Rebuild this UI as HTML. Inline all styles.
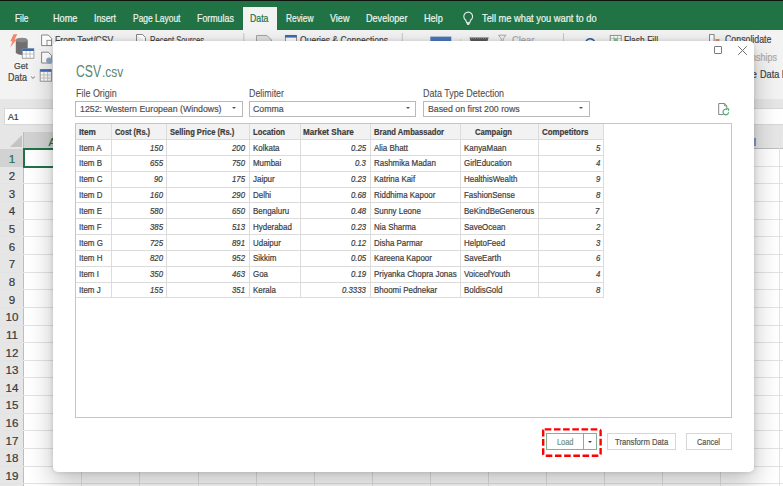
<!DOCTYPE html>
<html><head><meta charset="utf-8">
<style>
*{margin:0;padding:0;box-sizing:border-box}
html,body{width:783px;height:486px;overflow:hidden;background:#fff;font-family:"Liberation Sans",sans-serif}
.a{position:absolute}
.t{position:absolute;white-space:pre;transform-origin:0 0;font-family:"Liberation Sans",sans-serif;-webkit-text-stroke:0.2px currentColor}
#top{left:0;top:0;width:783px;height:1px;background:#0f140f}
#tabs{left:0;top:1px;width:783px;height:29px;background:#217346}
#datatab{left:243px;top:7px;width:34px;height:23px;background:#f3f3f3}
#ribbon{left:0;top:30px;width:783px;height:69px;background:#f3f3f3}
#fbar{left:0;top:99px;width:783px;height:33px;background:#e6e6e6}
#namebox{left:4px;top:107.5px;width:130px;height:17px;background:#fff;border:1px solid #d8d8d8}
#fx{left:700px;top:107.5px;width:83px;height:17px;background:#fff;border:1px solid #d8d8d8;border-right:0}
#grid{left:0;top:132px;width:783px;height:354px;background:#fff}
#colhdr{left:0;top:132px;width:783px;height:17px;background:#e6e6e6;border-bottom:1px solid #bdbdbd}
#rowhdr{left:0;top:132px;width:24px;height:354px;background:#e6e6e6;border-right:1px solid #bdbdbd}
.vl{position:absolute;top:132px;width:1px;height:354px;background:#e3e3e3}
.hl{position:absolute;left:0;width:783px;height:1px;background:#e3e3e3}
.rn{position:absolute;left:0;width:23px;text-align:center;font-size:10.4px;line-height:12px;color:#444;transform:scaleX(.95)}
#dlg{left:53px;top:41px;width:701px;height:431px;background:#fff;border-radius:5px;box-shadow:0 11px 26px rgba(0,0,0,.25),0 0 5px rgba(0,0,0,.14)}
.dd{position:absolute;top:100.5px;height:16px;border:1px solid #b9b9b9;background:#fff}
.arr{position:absolute;width:0;height:0;border-left:2.2px solid transparent;border-right:2.2px solid transparent;border-top:2.6px solid #555}
#prev{left:75px;top:123px;width:657px;height:295px;border:1px solid #c6c6c6;background:#fff}
#thdr{left:76px;top:124px;width:528px;height:15.6px;background:#f2f2f2}
.tv{position:absolute;top:124px;width:1px;height:174px;background:#dcdcdc}
.th{position:absolute;left:76px;width:528px;height:1px;background:#dcdcdc}
.btn{position:absolute;top:433px;height:17px;border:1px solid #d6d6d6;background:#fff}
</style></head><body>
<div id="top" class="a"></div>
<div id="tabs" class="a"></div>
<div id="datatab" class="a"></div>
<svg class="a" style="left:455px;top:6px" width="30" height="22"><path d="M10.8 14.2 A4.4 4.4 0 1 1 15.6 14.2 L14.7 16.8 H11.7 Z" fill="none" stroke="#e3ece6" stroke-width="1.1"/><path d="M11.6 16.6 H14.8 L14.4 18.6 Q13.2 19.6 12 18.6 Z" fill="#e3ece6"/></svg>
<div id="ribbon" class="a"></div>
<div id="fbar" class="a"></div>
<div id="namebox" class="a"></div>
<div id="fx" class="a"></div>
<svg class="a" style="left:0;top:30px" width="783" height="69">
<polygon points="13.5,4.2 17.4,4.2 14.6,9.6 16.6,9.6 10.2,17.6 12.4,11.2 10.4,11.2" fill="#f4846c"/>
<path d="M15.8 10.2 Q21.7 5.8 27.7 10.2 V23 Q21.7 27 15.8 23 Z" fill="#6f6f6f"/>
<ellipse cx="21.7" cy="10" rx="5.9" ry="2.3" fill="#8a8a8a"/>
<rect x="22.3" y="18.8" width="11.6" height="9.4" fill="#fff" stroke="#8c8c8c" stroke-width="0.8"/>
<rect x="22.3" y="18.6" width="11.6" height="2.4" fill="#3b6db5"/>
<path d="M22.3 24 H33.9 M26.2 21 V28.2 M30 21 V28.2" stroke="#b0b0b0" stroke-width="0.7"/>
<path d="M31.1 46.6 L33 48.4 L34.9 46.6" stroke="#666" stroke-width="0.9" fill="none"/>
<path d="M41.6 5 H48.3 L51.6 8.3 V15.6 H41.6 Z" fill="#fff" stroke="#7a7a7a" stroke-width="0.9"/>
<rect x="47" y="10.3" width="4.6" height="5.3" fill="#fff" stroke="#7a7a7a" stroke-width="0.8"/>
<path d="M41.6 22.2 H48.3 L51.6 25.5 V33 H41.6 Z" fill="#fff" stroke="#7a7a7a" stroke-width="0.9"/>
<circle cx="49.2" cy="30.6" r="3.1" fill="#8fa6c4"/>
<rect x="40.2" y="39.6" width="11.2" height="11.6" fill="#fff" stroke="#8c8c8c" stroke-width="0.9"/>
<rect x="40.2" y="39.4" width="11.2" height="2.4" fill="#3b6db5"/>
<path d="M40.2 45 H51.4 M40.2 48 H51.4 M43.9 41.8 V51.2 M47.6 41.8 V51.2" stroke="#b5b5b5" stroke-width="0.7"/>
<path d="M136.5 4.5 H142.5 L145.5 7.5 V12" fill="#fff" stroke="#7a7a7a" stroke-width="0.9"/>
<path d="M136.5 4.5 V12" stroke="#7a7a7a" stroke-width="0.9"/>
<rect x="243.3" y="3" width="1" height="8" fill="#c8c8c8"/>
<path d="M256.5 12 V5.5 H267 L271.5 10 V12" fill="#e0e0e0" stroke="#9a9a9a" stroke-width="0.9"/>
<rect x="285.4" y="5.4" width="11" height="8" fill="#fff" stroke="#8a8a8a" stroke-width="0.9"/>
<rect x="285" y="5" width="11.8" height="2.6" fill="#3b6db5"/>
<rect x="401.8" y="3" width="1" height="8" fill="#c8c8c8"/>
<rect x="430.3" y="6.6" width="21" height="5" fill="#4a78b8"/>
<rect x="460.3" y="9" width="0.8" height="3" fill="#c8c8c8"/>
<path d="M469.5 7.5 H488.7 L487.5 11 H470.5 Z" fill="#5a5a5a"/>
<path d="M471 8.5 H487" stroke="#9a9a9a" stroke-width="0.6" stroke-dasharray="1 1"/>
<path d="M498.5 5.2 H506 L503.2 8.8 V12 H501.3 V8.8 Z" fill="none" stroke="#a0a0a0" stroke-width="0.9"/>
<rect x="563" y="3" width="1" height="8" fill="#c8c8c8"/>
<path d="M585.8 12 A4.6 4.6 0 0 1 594.6 12" stroke="#2d5ca6" stroke-width="1.5" fill="none"/>
<rect x="610.2" y="5.4" width="11" height="7" fill="#fff" stroke="#8a8a8a" stroke-width="0.9"/>
<path d="M610.2 8.4 H621.2 M614 5.4 V12.4 M617.6 5.4 V12.4" stroke="#9a9a9a" stroke-width="0.6"/>
<rect x="614" y="8.4" width="3.6" height="4" fill="#7fc39a"/>
<rect x="709.5" y="4.6" width="4.6" height="7" fill="#fff" stroke="#7a7a7a" stroke-width="0.9"/>
<rect x="715.5" y="9" width="4" height="3" fill="#e8875f"/>
</svg>
<div id="grid" class="a"></div>
<div id="colhdr" class="a"></div>
<div id="rowhdr" class="a"></div>
<div class="vl" style="left:81.30px"></div>
<div class="vl" style="left:139.40px"></div>
<div class="vl" style="left:197.50px"></div>
<div class="vl" style="left:255.60px"></div>
<div class="vl" style="left:313.70px"></div>
<div class="vl" style="left:371.80px"></div>
<div class="vl" style="left:429.90px"></div>
<div class="vl" style="left:488.00px"></div>
<div class="vl" style="left:546.10px"></div>
<div class="vl" style="left:604.20px"></div>
<div class="vl" style="left:662.30px"></div>
<div class="vl" style="left:720.40px"></div>
<div class="vl" style="left:778.50px"></div>
<div class="hl" style="top:165.83px"></div>
<div class="hl" style="top:183.46px"></div>
<div class="hl" style="top:201.09px"></div>
<div class="hl" style="top:218.72px"></div>
<div class="hl" style="top:236.35px"></div>
<div class="hl" style="top:253.98px"></div>
<div class="hl" style="top:271.61px"></div>
<div class="hl" style="top:289.24px"></div>
<div class="hl" style="top:306.87px"></div>
<div class="hl" style="top:324.50px"></div>
<div class="hl" style="top:342.13px"></div>
<div class="hl" style="top:359.76px"></div>
<div class="hl" style="top:377.39px"></div>
<div class="hl" style="top:395.02px"></div>
<div class="hl" style="top:412.65px"></div>
<div class="hl" style="top:430.28px"></div>
<div class="hl" style="top:447.91px"></div>
<div class="hl" style="top:465.54px"></div>
<div class="hl" style="top:483.17px"></div>
<div class="hl" style="top:500.80px"></div>
<div class="a" style="left:24px;top:132px;width:57.8px;height:16.5px;background:#d2d2d2;border-bottom:1px solid #217346"></div>
<div class="a" style="left:0;top:148.5px;width:23.5px;height:18.6px;background:#d2d2d2;border-right:1px solid #217346"></div>
<svg class="a" style="left:0;top:132px" width="24" height="17"><polygon points="10,15 22,3 22,15" fill="#c4c4c4"/></svg>
<div class="a" style="left:23px;top:147.7px;width:59.5px;height:20.2px;border:2px solid #217346"></div>
<div class="a" style="left:754px;top:137.5px;width:1.6px;height:8.5px;background:#7c9fcf"></div>
<span class="t" style="left:15.20px;top:13.60px;font-size:10.14px;line-height:10.14px;color:#eef4f0;transform:scaleX(0.827);">File</span>
<span class="t" style="left:53.20px;top:13.60px;font-size:10.14px;line-height:10.14px;color:#eef4f0;transform:scaleX(0.906);">Home</span>
<span class="t" style="left:94.20px;top:13.60px;font-size:10.14px;line-height:10.14px;color:#eef4f0;transform:scaleX(0.862);">Insert</span>
<span class="t" style="left:132.70px;top:13.60px;font-size:10.14px;line-height:10.14px;color:#eef4f0;transform:scaleX(0.834);">Page Layout</span>
<span class="t" style="left:197.20px;top:13.60px;font-size:10.14px;line-height:10.14px;color:#eef4f0;transform:scaleX(0.873);">Formulas</span>
<span class="t" style="left:250.20px;top:13.60px;font-size:10.14px;line-height:10.14px;color:#217346;transform:scaleX(0.860);">Data</span>
<span class="t" style="left:286.00px;top:13.60px;font-size:10.14px;line-height:10.14px;color:#eef4f0;transform:scaleX(0.826);">Review</span>
<span class="t" style="left:330.00px;top:13.60px;font-size:10.14px;line-height:10.14px;color:#eef4f0;transform:scaleX(0.891);">View</span>
<span class="t" style="left:366.00px;top:13.60px;font-size:10.14px;line-height:10.14px;color:#eef4f0;transform:scaleX(0.898);">Developer</span>
<span class="t" style="left:424.00px;top:13.60px;font-size:10.14px;line-height:10.14px;color:#eef4f0;transform:scaleX(0.897);">Help</span>
<span class="t" style="left:482.00px;top:13.60px;font-size:10.14px;line-height:10.14px;color:#eef4f0;transform:scaleX(0.918);">Tell me what you want to do</span>
<span class="t" style="left:14.20px;top:61.40px;font-size:9.71px;line-height:9.71px;color:#444;transform:scaleX(0.891);">Get</span>
<span class="t" style="left:8.00px;top:73.40px;font-size:10.14px;line-height:10.14px;color:#444;transform:scaleX(0.883);">Data</span>
<span class="t" style="left:54.60px;top:35.80px;font-size:10.14px;line-height:10.14px;color:#444;transform:scaleX(0.851);">From Text/CSV</span>
<span class="t" style="left:150.00px;top:35.80px;font-size:10.14px;line-height:10.14px;color:#444;transform:scaleX(0.750);">Recent Sources</span>
<span class="t" style="left:300.00px;top:35.80px;font-size:10.14px;line-height:10.14px;color:#444;transform:scaleX(0.846);">Queries &amp; Connections</span>
<span class="t" style="left:512.20px;top:35.80px;font-size:10.14px;line-height:10.14px;color:#a8a8a8;transform:scaleX(0.927);">Clear</span>
<span class="t" style="left:624.20px;top:35.80px;font-size:10.14px;line-height:10.14px;color:#444;transform:scaleX(0.840);">Flash Fill</span>
<span class="t" style="left:724.50px;top:35.10px;font-size:10.0px;line-height:10.0px;color:#444;transform:scaleX(0.879);">Consolidate</span>
<span class="t" style="left:722.97px;top:52.90px;font-size:10.0px;line-height:10.0px;color:#aaaaaa;transform:scaleX(0.900);">Relationships</span>
<span class="t" style="left:759.80px;top:70.40px;font-size:10.14px;line-height:10.14px;color:#444;transform:scaleX(0.900);">Data Model</span>
<span class="t" style="left:724.34px;top:70.40px;font-size:10.14px;line-height:10.14px;color:#444;transform:scaleX(0.900);">Manage</span>
<span class="t" style="left:8.20px;top:111.50px;font-size:9.71px;line-height:9.71px;color:#333;transform:scaleX(0.898);">A1</span>
<span class="t" style="left:48.40px;top:137.00px;font-size:11.59px;line-height:11.59px;color:#217346;">A</span>
<span class="t" style="left:8.78px;top:153.60px;font-size:11.59px;line-height:11.59px;color:#217346;">1</span>
<span class="t" style="left:8.78px;top:171.23px;font-size:11.59px;line-height:11.59px;color:#3a3a3a;">2</span>
<span class="t" style="left:8.78px;top:188.86px;font-size:11.59px;line-height:11.59px;color:#3a3a3a;">3</span>
<span class="t" style="left:8.78px;top:206.49px;font-size:11.59px;line-height:11.59px;color:#3a3a3a;">4</span>
<span class="t" style="left:8.78px;top:224.12px;font-size:11.59px;line-height:11.59px;color:#3a3a3a;">5</span>
<span class="t" style="left:8.78px;top:241.75px;font-size:11.59px;line-height:11.59px;color:#3a3a3a;">6</span>
<span class="t" style="left:8.78px;top:259.38px;font-size:11.59px;line-height:11.59px;color:#3a3a3a;">7</span>
<span class="t" style="left:8.78px;top:277.01px;font-size:11.59px;line-height:11.59px;color:#3a3a3a;">8</span>
<span class="t" style="left:8.78px;top:294.64px;font-size:11.59px;line-height:11.59px;color:#3a3a3a;">9</span>
<span class="t" style="left:5.56px;top:312.27px;font-size:11.59px;line-height:11.59px;color:#3a3a3a;">10</span>
<span class="t" style="left:5.99px;top:329.90px;font-size:11.59px;line-height:11.59px;color:#3a3a3a;">11</span>
<span class="t" style="left:5.56px;top:347.53px;font-size:11.59px;line-height:11.59px;color:#3a3a3a;">12</span>
<span class="t" style="left:5.56px;top:365.16px;font-size:11.59px;line-height:11.59px;color:#3a3a3a;">13</span>
<span class="t" style="left:5.56px;top:382.79px;font-size:11.59px;line-height:11.59px;color:#3a3a3a;">14</span>
<span class="t" style="left:5.56px;top:400.42px;font-size:11.59px;line-height:11.59px;color:#3a3a3a;">15</span>
<span class="t" style="left:5.56px;top:418.05px;font-size:11.59px;line-height:11.59px;color:#3a3a3a;">16</span>
<span class="t" style="left:5.56px;top:435.68px;font-size:11.59px;line-height:11.59px;color:#3a3a3a;">17</span>
<span class="t" style="left:5.56px;top:453.31px;font-size:11.59px;line-height:11.59px;color:#3a3a3a;">18</span>
<span class="t" style="left:5.56px;top:470.94px;font-size:11.59px;line-height:11.59px;color:#3a3a3a;">19</span>
<span class="t" style="left:5.56px;top:488.57px;font-size:11.59px;line-height:11.59px;color:#3a3a3a;">20</span>
<div id="dlg" class="a"></div>
<div class="a" style="left:714px;top:46px;width:8.2px;height:8.2px;border:1px solid #7a7a7a;border-radius:1px"></div>
<svg class="a" style="left:737px;top:45px" width="11" height="11"><path d="M1.2 1.2 L9.8 9.8 M9.8 1.2 L1.2 9.8" stroke="#6e6e6e" stroke-width="1" fill="none"/></svg>
<div class="dd" style="left:75px;width:167.6px"></div>
<div class="arr" style="left:232px;top:107.2px"></div>
<div class="dd" style="left:248.8px;width:167.4px"></div>
<div class="arr" style="left:405.6px;top:107.2px"></div>
<div class="dd" style="left:422.5px;width:167.7px"></div>
<div class="arr" style="left:579.4px;top:107.2px"></div>
<svg class="a" style="left:716px;top:101px" width="16" height="16">
<path d="M2.7 2.5 H8.6 L10.8 4.7 V7.8 M7.5 13.6 H2.7 V2.5" stroke="#858585" stroke-width="1" fill="none"/>
<path d="M8.4 2.5 V4.9 H10.8" stroke="#777" stroke-width="0.8" fill="none"/>
<path d="M12.6 11.2 A2.8 2.8 0 1 1 11.3 8.6" stroke="#4fa872" stroke-width="1.2" fill="none"/>
<path d="M10.6 7.6 L12.9 7.8 L12.4 10" stroke="#4fa872" stroke-width="1" fill="none"/>
</svg>
<div id="prev" class="a"></div>
<div id="thdr" class="a"></div>
<div class="tv" style="left:110.50px"></div>
<div class="tv" style="left:165.80px"></div>
<div class="tv" style="left:248.60px"></div>
<div class="tv" style="left:299.50px"></div>
<div class="tv" style="left:369.60px"></div>
<div class="tv" style="left:460.30px"></div>
<div class="tv" style="left:537.80px"></div>
<div class="tv" style="left:603.30px"></div>
<div class="th" style="top:139.1px"></div>
<div class="th" style="top:154.84px"></div>
<div class="th" style="top:170.68px"></div>
<div class="th" style="top:186.52px"></div>
<div class="th" style="top:202.36px"></div>
<div class="th" style="top:218.20px"></div>
<div class="th" style="top:234.04px"></div>
<div class="th" style="top:249.88px"></div>
<div class="th" style="top:265.72px"></div>
<div class="th" style="top:281.56px"></div>
<div class="th" style="top:297.40px"></div>
<div class="btn" style="left:546.2px;width:50.8px;border-color:#86b092"></div>
<div class="a" style="left:583.1px;top:433px;width:1px;height:17px;background:#86b092"></div>
<div class="arr" style="left:587.6px;top:440.6px;border-top-color:#444"></div>
<div class="btn" style="left:607.1px;width:69.3px"></div>
<div class="btn" style="left:686.4px;width:45.8px"></div>
<svg class="a" style="left:540px;top:426px" width="64" height="32"><rect x="3.2" y="3.4" width="57.4" height="26.4" rx="1.5" fill="none" stroke="#ff0000" stroke-width="2.4" stroke-dasharray="6.6 2.6"/></svg>
<span class="t" style="left:75.70px;top:62.50px;font-size:16.09px;line-height:16.09px;color:#5c8571;transform:scaleX(0.759);-webkit-text-stroke:0;">CSV</span>
<span class="t" style="left:102.20px;top:65.50px;font-size:13.77px;line-height:13.77px;color:#5c8571;transform:scaleX(0.870);-webkit-text-stroke:0;">.csv</span>
<span class="t" style="left:75.60px;top:88.60px;font-size:10.0px;line-height:10.0px;color:#505050;transform:scaleX(0.895);-webkit-text-stroke:0.1px currentColor;">File Origin</span>
<span class="t" style="left:80.20px;top:104.20px;font-size:9.71px;line-height:9.71px;color:#505050;transform:scaleX(0.906);">1252: Western European (Windows)</span>
<span class="t" style="left:249.20px;top:88.80px;font-size:10.0px;line-height:10.0px;color:#505050;transform:scaleX(0.887);-webkit-text-stroke:0.1px currentColor;">Delimiter</span>
<span class="t" style="left:253.00px;top:104.40px;font-size:9.71px;line-height:9.71px;color:#505050;transform:scaleX(0.900);">Comma</span>
<span class="t" style="left:422.90px;top:88.90px;font-size:10.0px;line-height:10.0px;color:#505050;transform:scaleX(0.897);-webkit-text-stroke:0.1px currentColor;">Data Type Detection</span>
<span class="t" style="left:427.60px;top:104.20px;font-size:9.71px;line-height:9.71px;color:#505050;transform:scaleX(0.904);">Based on first 200 rows</span>
<span class="t" style="left:78.80px;top:127.90px;font-size:8.55px;line-height:8.55px;color:#3c3c3c;font-weight:700;transform:scaleX(0.962);">Item</span>
<span class="t" style="left:115.20px;top:127.90px;font-size:8.55px;line-height:8.55px;color:#3c3c3c;font-weight:700;transform:scaleX(0.869);">Cost (Rs.)</span>
<span class="t" style="left:169.50px;top:127.90px;font-size:8.55px;line-height:8.55px;color:#3c3c3c;font-weight:700;transform:scaleX(0.884);">Selling Price (Rs.)</span>
<span class="t" style="left:252.70px;top:127.90px;font-size:8.55px;line-height:8.55px;color:#3c3c3c;font-weight:700;transform:scaleX(0.899);">Location</span>
<span class="t" style="left:303.40px;top:127.90px;font-size:8.55px;line-height:8.55px;color:#3c3c3c;font-weight:700;transform:scaleX(0.946);">Market Share</span>
<span class="t" style="left:373.60px;top:127.90px;font-size:8.55px;line-height:8.55px;color:#3c3c3c;font-weight:700;transform:scaleX(0.892);">Brand Ambassador</span>
<span class="t" style="left:474.70px;top:127.90px;font-size:8.55px;line-height:8.55px;color:#3c3c3c;font-weight:700;transform:scaleX(0.895);">Campaign</span>
<span class="t" style="left:541.60px;top:127.90px;font-size:8.55px;line-height:8.55px;color:#3c3c3c;font-weight:700;transform:scaleX(0.921);">Competitors</span>
<span class="t" style="left:78.50px;top:143.60px;font-size:8.55px;line-height:8.55px;color:#3c3c3c;transform:scaleX(0.930);">Item A</span>
<span class="t" style="left:149.50px;top:143.60px;font-size:8.55px;line-height:8.55px;color:#3c3c3c;font-style:italic;transform:scaleX(0.910);">150</span>
<span class="t" style="left:232.30px;top:143.60px;font-size:8.55px;line-height:8.55px;color:#3c3c3c;font-style:italic;transform:scaleX(0.910);">200</span>
<span class="t" style="left:252.60px;top:143.60px;font-size:8.55px;line-height:8.55px;color:#3c3c3c;transform:scaleX(0.930);">Kolkata</span>
<span class="t" style="left:351.14px;top:143.60px;font-size:8.55px;line-height:8.55px;color:#3c3c3c;font-style:italic;transform:scaleX(0.910);">0.25</span>
<span class="t" style="left:373.60px;top:143.60px;font-size:8.55px;line-height:8.55px;color:#3c3c3c;transform:scaleX(0.930);">Alia Bhatt</span>
<span class="t" style="left:464.30px;top:143.60px;font-size:8.55px;line-height:8.55px;color:#3c3c3c;transform:scaleX(0.930);">KanyaMaan</span>
<span class="t" style="left:595.65px;top:143.60px;font-size:8.55px;line-height:8.55px;color:#3c3c3c;font-style:italic;transform:scaleX(0.910);">5</span>
<span class="t" style="left:78.50px;top:159.44px;font-size:8.55px;line-height:8.55px;color:#3c3c3c;transform:scaleX(0.930);">Item B</span>
<span class="t" style="left:149.50px;top:159.44px;font-size:8.55px;line-height:8.55px;color:#3c3c3c;font-style:italic;transform:scaleX(0.910);">655</span>
<span class="t" style="left:232.30px;top:159.44px;font-size:8.55px;line-height:8.55px;color:#3c3c3c;font-style:italic;transform:scaleX(0.910);">750</span>
<span class="t" style="left:252.60px;top:159.44px;font-size:8.55px;line-height:8.55px;color:#3c3c3c;transform:scaleX(0.930);">Mumbai</span>
<span class="t" style="left:355.46px;top:159.44px;font-size:8.55px;line-height:8.55px;color:#3c3c3c;font-style:italic;transform:scaleX(0.910);">0.3</span>
<span class="t" style="left:373.60px;top:159.44px;font-size:8.55px;line-height:8.55px;color:#3c3c3c;transform:scaleX(0.930);">Rashmika Madan</span>
<span class="t" style="left:464.30px;top:159.44px;font-size:8.55px;line-height:8.55px;color:#3c3c3c;transform:scaleX(0.930);">GirlEducation</span>
<span class="t" style="left:595.65px;top:159.44px;font-size:8.55px;line-height:8.55px;color:#3c3c3c;font-style:italic;transform:scaleX(0.910);">4</span>
<span class="t" style="left:78.50px;top:175.28px;font-size:8.55px;line-height:8.55px;color:#3c3c3c;transform:scaleX(0.930);">Item C</span>
<span class="t" style="left:153.82px;top:175.28px;font-size:8.55px;line-height:8.55px;color:#3c3c3c;font-style:italic;transform:scaleX(0.910);">90</span>
<span class="t" style="left:232.30px;top:175.28px;font-size:8.55px;line-height:8.55px;color:#3c3c3c;font-style:italic;transform:scaleX(0.910);">175</span>
<span class="t" style="left:252.60px;top:175.28px;font-size:8.55px;line-height:8.55px;color:#3c3c3c;transform:scaleX(0.930);">Jaipur</span>
<span class="t" style="left:351.14px;top:175.28px;font-size:8.55px;line-height:8.55px;color:#3c3c3c;font-style:italic;transform:scaleX(0.910);">0.23</span>
<span class="t" style="left:373.60px;top:175.28px;font-size:8.55px;line-height:8.55px;color:#3c3c3c;transform:scaleX(0.930);">Katrina Kaif</span>
<span class="t" style="left:464.30px;top:175.28px;font-size:8.55px;line-height:8.55px;color:#3c3c3c;transform:scaleX(0.930);">HealthisWealth</span>
<span class="t" style="left:595.65px;top:175.28px;font-size:8.55px;line-height:8.55px;color:#3c3c3c;font-style:italic;transform:scaleX(0.910);">9</span>
<span class="t" style="left:78.50px;top:191.12px;font-size:8.55px;line-height:8.55px;color:#3c3c3c;transform:scaleX(0.930);">Item D</span>
<span class="t" style="left:149.50px;top:191.12px;font-size:8.55px;line-height:8.55px;color:#3c3c3c;font-style:italic;transform:scaleX(0.910);">160</span>
<span class="t" style="left:232.30px;top:191.12px;font-size:8.55px;line-height:8.55px;color:#3c3c3c;font-style:italic;transform:scaleX(0.910);">290</span>
<span class="t" style="left:252.60px;top:191.12px;font-size:8.55px;line-height:8.55px;color:#3c3c3c;transform:scaleX(0.930);">Delhi</span>
<span class="t" style="left:351.14px;top:191.12px;font-size:8.55px;line-height:8.55px;color:#3c3c3c;font-style:italic;transform:scaleX(0.910);">0.68</span>
<span class="t" style="left:373.60px;top:191.12px;font-size:8.55px;line-height:8.55px;color:#3c3c3c;transform:scaleX(0.930);">Riddhima Kapoor</span>
<span class="t" style="left:464.30px;top:191.12px;font-size:8.55px;line-height:8.55px;color:#3c3c3c;transform:scaleX(0.930);">FashionSense</span>
<span class="t" style="left:595.65px;top:191.12px;font-size:8.55px;line-height:8.55px;color:#3c3c3c;font-style:italic;transform:scaleX(0.910);">8</span>
<span class="t" style="left:78.50px;top:206.96px;font-size:8.55px;line-height:8.55px;color:#3c3c3c;transform:scaleX(0.930);">Item E</span>
<span class="t" style="left:149.50px;top:206.96px;font-size:8.55px;line-height:8.55px;color:#3c3c3c;font-style:italic;transform:scaleX(0.910);">580</span>
<span class="t" style="left:232.30px;top:206.96px;font-size:8.55px;line-height:8.55px;color:#3c3c3c;font-style:italic;transform:scaleX(0.910);">650</span>
<span class="t" style="left:252.60px;top:206.96px;font-size:8.55px;line-height:8.55px;color:#3c3c3c;transform:scaleX(0.930);">Bengaluru</span>
<span class="t" style="left:351.14px;top:206.96px;font-size:8.55px;line-height:8.55px;color:#3c3c3c;font-style:italic;transform:scaleX(0.910);">0.48</span>
<span class="t" style="left:373.60px;top:206.96px;font-size:8.55px;line-height:8.55px;color:#3c3c3c;transform:scaleX(0.930);">Sunny Leone</span>
<span class="t" style="left:464.30px;top:206.96px;font-size:8.55px;line-height:8.55px;color:#3c3c3c;transform:scaleX(0.930);">BeKindBeGenerous</span>
<span class="t" style="left:594.74px;top:206.96px;font-size:8.55px;line-height:8.55px;color:#3c3c3c;font-style:italic;transform:scaleX(0.910);">7</span>
<span class="t" style="left:78.50px;top:222.80px;font-size:8.55px;line-height:8.55px;color:#3c3c3c;transform:scaleX(0.930);">Item F</span>
<span class="t" style="left:149.50px;top:222.80px;font-size:8.55px;line-height:8.55px;color:#3c3c3c;font-style:italic;transform:scaleX(0.910);">385</span>
<span class="t" style="left:232.30px;top:222.80px;font-size:8.55px;line-height:8.55px;color:#3c3c3c;font-style:italic;transform:scaleX(0.910);">513</span>
<span class="t" style="left:252.60px;top:222.80px;font-size:8.55px;line-height:8.55px;color:#3c3c3c;transform:scaleX(0.930);">Hyderabad</span>
<span class="t" style="left:351.14px;top:222.80px;font-size:8.55px;line-height:8.55px;color:#3c3c3c;font-style:italic;transform:scaleX(0.910);">0.23</span>
<span class="t" style="left:373.60px;top:222.80px;font-size:8.55px;line-height:8.55px;color:#3c3c3c;transform:scaleX(0.930);">Nia Sharma</span>
<span class="t" style="left:464.30px;top:222.80px;font-size:8.55px;line-height:8.55px;color:#3c3c3c;transform:scaleX(0.930);">SaveOcean</span>
<span class="t" style="left:595.65px;top:222.80px;font-size:8.55px;line-height:8.55px;color:#3c3c3c;font-style:italic;transform:scaleX(0.910);">2</span>
<span class="t" style="left:78.50px;top:238.64px;font-size:8.55px;line-height:8.55px;color:#3c3c3c;transform:scaleX(0.930);">Item G</span>
<span class="t" style="left:149.50px;top:238.64px;font-size:8.55px;line-height:8.55px;color:#3c3c3c;font-style:italic;transform:scaleX(0.910);">725</span>
<span class="t" style="left:232.30px;top:238.64px;font-size:8.55px;line-height:8.55px;color:#3c3c3c;font-style:italic;transform:scaleX(0.910);">891</span>
<span class="t" style="left:252.60px;top:238.64px;font-size:8.55px;line-height:8.55px;color:#3c3c3c;transform:scaleX(0.930);">Udaipur</span>
<span class="t" style="left:351.14px;top:238.64px;font-size:8.55px;line-height:8.55px;color:#3c3c3c;font-style:italic;transform:scaleX(0.910);">0.12</span>
<span class="t" style="left:373.60px;top:238.64px;font-size:8.55px;line-height:8.55px;color:#3c3c3c;transform:scaleX(0.930);">Disha Parmar</span>
<span class="t" style="left:464.30px;top:238.64px;font-size:8.55px;line-height:8.55px;color:#3c3c3c;transform:scaleX(0.930);">HelptoFeed</span>
<span class="t" style="left:595.65px;top:238.64px;font-size:8.55px;line-height:8.55px;color:#3c3c3c;font-style:italic;transform:scaleX(0.910);">3</span>
<span class="t" style="left:78.50px;top:254.48px;font-size:8.55px;line-height:8.55px;color:#3c3c3c;transform:scaleX(0.930);">Item H</span>
<span class="t" style="left:149.50px;top:254.48px;font-size:8.55px;line-height:8.55px;color:#3c3c3c;font-style:italic;transform:scaleX(0.910);">820</span>
<span class="t" style="left:232.30px;top:254.48px;font-size:8.55px;line-height:8.55px;color:#3c3c3c;font-style:italic;transform:scaleX(0.910);">952</span>
<span class="t" style="left:252.60px;top:254.48px;font-size:8.55px;line-height:8.55px;color:#3c3c3c;transform:scaleX(0.930);">Sikkim</span>
<span class="t" style="left:351.14px;top:254.48px;font-size:8.55px;line-height:8.55px;color:#3c3c3c;font-style:italic;transform:scaleX(0.910);">0.05</span>
<span class="t" style="left:373.60px;top:254.48px;font-size:8.55px;line-height:8.55px;color:#3c3c3c;transform:scaleX(0.930);">Kareena Kapoor</span>
<span class="t" style="left:464.30px;top:254.48px;font-size:8.55px;line-height:8.55px;color:#3c3c3c;transform:scaleX(0.930);">SaveEarth</span>
<span class="t" style="left:595.65px;top:254.48px;font-size:8.55px;line-height:8.55px;color:#3c3c3c;font-style:italic;transform:scaleX(0.910);">6</span>
<span class="t" style="left:78.50px;top:270.32px;font-size:8.55px;line-height:8.55px;color:#3c3c3c;transform:scaleX(0.930);">Item I</span>
<span class="t" style="left:149.50px;top:270.32px;font-size:8.55px;line-height:8.55px;color:#3c3c3c;font-style:italic;transform:scaleX(0.910);">350</span>
<span class="t" style="left:232.30px;top:270.32px;font-size:8.55px;line-height:8.55px;color:#3c3c3c;font-style:italic;transform:scaleX(0.910);">463</span>
<span class="t" style="left:252.60px;top:270.32px;font-size:8.55px;line-height:8.55px;color:#3c3c3c;transform:scaleX(0.930);">Goa</span>
<span class="t" style="left:351.14px;top:270.32px;font-size:8.55px;line-height:8.55px;color:#3c3c3c;font-style:italic;transform:scaleX(0.910);">0.19</span>
<span class="t" style="left:373.60px;top:270.32px;font-size:8.55px;line-height:8.55px;color:#3c3c3c;transform:scaleX(0.930);">Priyanka Chopra Jonas</span>
<span class="t" style="left:464.30px;top:270.32px;font-size:8.55px;line-height:8.55px;color:#3c3c3c;transform:scaleX(0.930);">VoiceofYouth</span>
<span class="t" style="left:595.65px;top:270.32px;font-size:8.55px;line-height:8.55px;color:#3c3c3c;font-style:italic;transform:scaleX(0.910);">4</span>
<span class="t" style="left:78.50px;top:286.16px;font-size:8.55px;line-height:8.55px;color:#3c3c3c;transform:scaleX(0.930);">Item J</span>
<span class="t" style="left:149.50px;top:286.16px;font-size:8.55px;line-height:8.55px;color:#3c3c3c;font-style:italic;transform:scaleX(0.910);">155</span>
<span class="t" style="left:232.30px;top:286.16px;font-size:8.55px;line-height:8.55px;color:#3c3c3c;font-style:italic;transform:scaleX(0.910);">351</span>
<span class="t" style="left:252.60px;top:286.16px;font-size:8.55px;line-height:8.55px;color:#3c3c3c;transform:scaleX(0.930);">Kerala</span>
<span class="t" style="left:342.49px;top:286.16px;font-size:8.55px;line-height:8.55px;color:#3c3c3c;font-style:italic;transform:scaleX(0.910);">0.3333</span>
<span class="t" style="left:373.60px;top:286.16px;font-size:8.55px;line-height:8.55px;color:#3c3c3c;transform:scaleX(0.930);">Bhoomi Pednekar</span>
<span class="t" style="left:464.30px;top:286.16px;font-size:8.55px;line-height:8.55px;color:#3c3c3c;transform:scaleX(0.930);">BoldisGold</span>
<span class="t" style="left:595.65px;top:286.16px;font-size:8.55px;line-height:8.55px;color:#3c3c3c;font-style:italic;transform:scaleX(0.910);">8</span>
<span class="t" style="left:557.00px;top:437.70px;font-size:8.55px;line-height:8.55px;color:#6f8f7c;transform:scaleX(0.867);">Load</span>
<span class="t" style="left:615.00px;top:437.80px;font-size:8.7px;line-height:8.7px;color:#555;transform:scaleX(0.887);">Transform Data</span>
<span class="t" style="left:697.00px;top:437.80px;font-size:8.7px;line-height:8.7px;color:#555;transform:scaleX(0.848);">Cancel</span>
</body></html>
